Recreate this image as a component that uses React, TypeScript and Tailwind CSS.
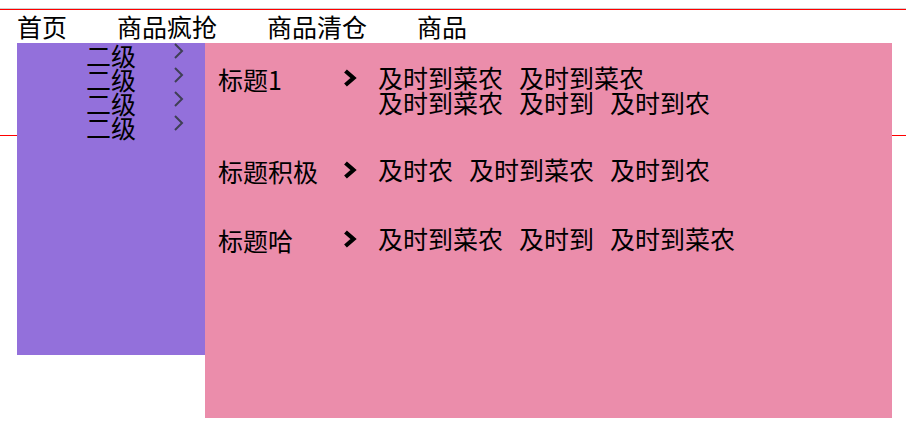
import React from 'react';

const navItems = ['首页', '商品疯抢', '商品清仓', '商品'];

const subItems = ['二级', '二级', '二级', '二级'];

const groups: { title: string; items: string[] }[] = [
    { title: '标题1', items: ['及时到菜农', '及时到菜农', '及时到菜农', '及时到', '及时到农'] },
    { title: '标题积极', items: ['及时农', '及时到菜农', '及时到农'] },
    { title: '标题哈', items: ['及时到菜农', '及时到', '及时到菜农'] },
];

const ThinChevron = () => (
    <svg viewBox="0 0 11 16" className="block shrink-0 w-[11px] h-[16px]">
        <path d="M2 1 L9 8 L2 15" fill="none" stroke="#3f3f55" strokeWidth="2" />
    </svg>
);

const BoldChevron = () => (
    <svg viewBox="0 0 16 20" className="block shrink-0 w-[16px] h-[20px]">
        <path d="M3.5 3 L11.5 10 L3.5 17" fill="none" stroke="#000" strokeWidth="4.2" strokeLinejoin="miter" />
    </svg>
);

export default function App() {
    return (
        <div
            className="relative w-[906px] h-[436px] bg-white text-black overflow-hidden"
            style={{ fontFamily: '"Noto Sans CJK SC", "Noto Sans", sans-serif' }}
        >
            <div className="h-[8px]" />
            <div className="h-px bg-[#cfcfcf]" />
            <div className="h-px bg-[#ff0000]" />

            {/* top nav */}
            <ul className="flex pl-[17px] h-[33px] text-[25px] leading-[33px]">
                {navItems.map((n) => (
                    <li key={n} className="mr-[50px]">
                        {n}
                    </li>
                ))}
            </ul>

            <div className="h-[93px] border-b border-[#ff0000]" />

            {/* dropdown */}
            <div className="absolute left-[17px] top-[43px] flex items-start">
                <div className="w-[188px] h-[312px] bg-[#9370db]">
                    {subItems.map((s, i) => (
                        <div key={i} className="grid grid-cols-[1fr_auto_1fr] h-[24px] text-[25px] leading-[24px]">
                            <div />
                            <div>{s}</div>
                            <div className="justify-self-end mr-[21px] self-start">
                                <ThinChevron />
                            </div>
                        </div>
                    ))}
                </div>

                <div className="w-[687px] h-[375px] bg-[#eb8dab] pt-[22px] pl-[13px]">
                    {groups.map((g) => (
                        <div key={g.title} className="flex items-start mb-[42px] text-[25px] leading-[25px]">
                            <div className="w-[124px] pt-[2px]">{g.title}</div>
                            <div className="h-[25px] w-[36px] flex items-center">
                                <BoldChevron />
                            </div>
                            <div className="w-[380px] flex flex-wrap gap-x-[16px]">
                                {g.items.map((it, i) => (
                                    <span key={i}>{it}</span>
                                ))}
                            </div>
                        </div>
                    ))}
                </div>
            </div>
        </div>
    );
}
